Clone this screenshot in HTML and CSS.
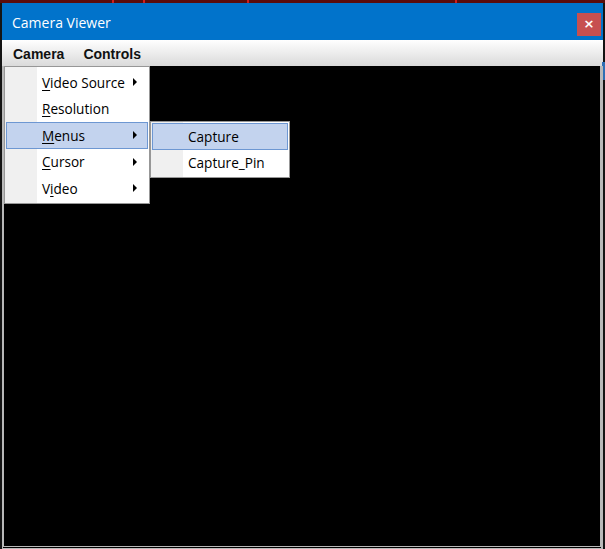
FILE: index.html
```html
<!DOCTYPE html>
<html lang="en">
<head>
    <meta charset="UTF-8">
    <title>Camera Viewer</title>
    <link rel="stylesheet" href="styles.css">
</head>
<body>

<div class="backdrop">
    <span class="streak s1"></span>
    <span class="streak s2"></span>
    <span class="streak s3"></span>
    <span class="streak s4"></span>
</div>
<span class="side-tab"></span>

<div class="window">
    <div class="titlebar">
        <span class="title">Camera Viewer</span>
        <div class="close">&times;</div>
    </div>

    <div class="menubar">
        <span class="menubar-item">Camera</span>
        <span class="menubar-item">Controls</span>
    </div>

    <div class="viewport">
        <div class="menu main-menu">
            <div class="item"><span class="label"><u>V</u>ideo Source</span><span class="arrow"></span></div>
            <div class="item"><span class="label"><u>R</u>esolution</span></div>
            <div class="item hover"><span class="label"><u>M</u>enus</span><span class="arrow"></span></div>
            <div class="item"><span class="label"><u>C</u>ursor</span><span class="arrow"></span></div>
            <div class="item"><span class="label">V<u>i</u>deo</span><span class="arrow"></span></div>
        </div>

        <div class="menu sub-menu">
            <div class="item hover"><span class="label">Capture</span></div>
            <div class="item"><span class="label">Capture_Pin</span></div>
        </div>
    </div>
</div>

</body>
</html>
```

FILE: styles.css
```css
* {
    margin: 0;
    padding: 0;
    box-sizing: border-box;
}
body {
    width: 605px;
    height: 549px;
    overflow: hidden;
    background: #141414;
    position: relative;
    font-family: 'Open Sans', 'Noto Sans', sans-serif;
}

.backdrop {
    height: 3px;
    background: #5b0c0c;
    position: relative;
}
.streak {
    position: absolute;
    top: 0;
    width: 2px;
    height: 3px;
    background: #d21e1e;
}
.s1 { left: 112px; }
.s2 { left: 143px; }
.s3 { left: 247px; }
.s4 { left: 455px; }

.side-tab {
    position: absolute;
    right: 0;
    top: 62px;
    width: 3px;
    height: 18px;
    background: #2f6fb4;
}

.window {
    margin-left: 2px;
    width: 601px;
    height: 546px;
    display: flex;
    flex-direction: column;
}

.titlebar {
    height: 37px;
    background: #0173cb;
    display: flex;
    align-items: flex-start;
    justify-content: space-between;
}
.title {
    color: #fff;
    font-size: 14px;
    margin: 10px 0 0 10px;
}
.close {
    width: 24px;
    height: 23px;
    margin: 10px 2px 0 0;
    background: #c75050;
    color: #fff;
    font-family: 'DejaVu Sans', sans-serif;
    font-size: 13px;
    font-weight: bold;
    line-height: 22px;
    text-align: center;
}

.menubar {
    height: 26px;
    background: linear-gradient(#ffffff, #dadada);
    display: flex;
    align-items: center;
    gap: 19px;
    padding: 2px 0 0 11px;
    font-family: 'Liberation Sans', Arial, sans-serif;
    font-weight: bold;
    font-size: 14px;
    color: #111;
}

.viewport {
    flex: 1;
    position: relative;
    background: #000;
    border-left: 2px solid #b9b9b9;
    border-right: 3px solid #b9b9b9;
    border-bottom: 3px double #b9b9b9;
}

.menu {
    position: absolute;
    background: linear-gradient(to right, #f0f0f0 var(--gutter), #fff var(--gutter));
    border: 1px solid #979797;
    padding: 1px;
    font-size: 13.6px;
    color: #000;
}
.main-menu {
    --gutter: 32px;
    left: 0;
    top: 0;
    width: 146px;
    padding-top: 2px;
}
.sub-menu {
    --gutter: 32px;
    left: 146px;
    top: 55px;
    width: 140px;
}

.item {
    height: 26.5px;
    display: flex;
    align-items: center;
    justify-content: space-between;
    padding: 0 10px 0 35px;
    border: 1px solid transparent;
}
.item.hover {
    background: #c3d3ee;
    border-color: #6d97d2;
}
.label u {
    text-decoration-thickness: 1px;
    text-underline-offset: 2px;
}
.arrow {
    width: 0;
    height: 0;
    border-top: 4px solid transparent;
    border-bottom: 4px solid transparent;
    border-left: 4px solid #000;
}
```
